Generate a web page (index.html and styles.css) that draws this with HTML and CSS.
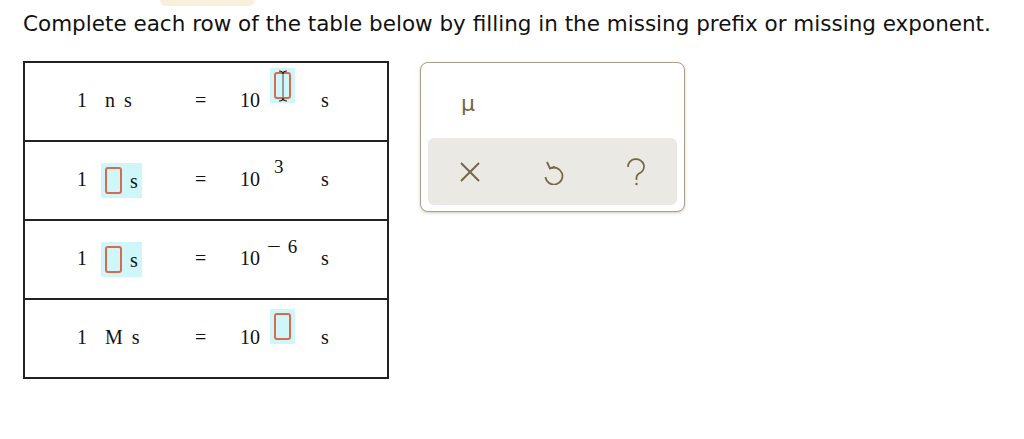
FILE: index.html
```html
<!DOCTYPE html>
<html>
<head>
<meta charset="utf-8">
<link rel="stylesheet" href="styles.css">
</head>
<body>
<div class="tab"></div>
<p class="prompt">Complete each row of the table below by filling in the missing prefix or missing exponent.</p>
<div class="main">
  <div class="table">
    <div class="row">
      <span class="one t">1</span>
      <span class="pre"><span class="t">n</span><span class="t s">s</span></span>
      <span class="eq t">=</span>
      <span class="ten t">10</span>
      <span class="exp"><span class="box box-r1"><span class="red"></span>
        <svg class="ibeam" width="10" height="32" viewBox="0 0 10 32"><path d="M1 1 Q5 1 5 4 Q5 1 9 1 M5 4 V28 M1 31 Q5 31 5 28 Q5 31 9 31" fill="none" stroke="#222" stroke-width="1.2"/><path d="M5 4 V28" stroke="#fff" stroke-width="0.6"/></svg>
      </span></span>
      <span class="unit t">s</span>
    </div>
    <div class="row">
      <span class="one t">1</span>
      <span class="pre"><span class="pbox"><span class="red"></span><span class="t ps">s</span></span></span>
      <span class="eq t">=</span>
      <span class="ten t">10</span>
      <span class="exp"><span class="sup">3</span></span>
      <span class="unit t">s</span>
    </div>
    <div class="row">
      <span class="one t">1</span>
      <span class="pre"><span class="pbox"><span class="red"></span><span class="t ps">s</span></span></span>
      <span class="eq t">=</span>
      <span class="ten t">10</span>
      <span class="exp"><span class="sup neg"><span class="minus">&minus;</span>6</span></span>
      <span class="unit t">s</span>
    </div>
    <div class="row">
      <span class="one t">1</span>
      <span class="pre"><span class="t">M</span><span class="t s">s</span></span>
      <span class="eq t">=</span>
      <span class="ten t">10</span>
      <span class="exp"><span class="box box-r4"><span class="red"></span></span></span>
      <span class="unit t">s</span>
    </div>
  </div>
  <div class="panel">
    <div class="keys"><span class="mu">μ</span></div>
    <div class="tools">
      <span class="tool"><svg width="24" height="24" viewBox="0 0 24 24"><path d="M3 3 L21 21 M21 3 L3 21" stroke="#746845" stroke-width="2" fill="none"/></svg></span>
      <span class="tool"><svg width="24" height="26" viewBox="0 0 24 26"><path d="M6 3 L9 9.5 L14 7.8" stroke="#746845" stroke-width="1.8" fill="none" stroke-linejoin="round"/><path d="M9 9.5 A8.5 8.5 0 1 1 4.5 18" stroke="#746845" stroke-width="1.8" fill="none"/></svg></span>
      <span class="tool"><svg width="24" height="28" viewBox="0 0 24 28"><path d="M4 9 A8 7.5 0 1 1 15 15.5 Q12.5 17 12.5 20 V22" stroke="#746845" stroke-width="1.7" fill="none"/><circle cx="12.5" cy="26" r="1.2" fill="#746845"/></svg></span>
    </div>
  </div>
</div>
</body>
</html>
```
FILE: styles.css
```css
html, body {
  margin: 0;
  padding: 0;
  background: #fff;
}
body {
  width: 1024px;
  height: 439px;
  overflow: hidden;
}
.tab {
  margin-left: 160px;
  width: 95px;
  height: 6px;
  background: #f7f1dc;
  border-radius: 0 0 8px 8px;
}
.prompt {
  margin: 5px 0 0 23px;
  font-family: "DejaVu Sans", Verdana, sans-serif;
  font-size: 21.5px;
  line-height: 25px;
  color: #111;
}
.main {
  display: flex;
  align-items: flex-start;
  margin: 25px 0 0 23px;
  gap: 31px;
}
.table {
  width: 362px;
  border: 2px solid #222;
  display: flex;
  flex-direction: column;
  gap: 2px;
  background: #222;
}
.row {
  height: 77px;
  background: #fff;
  display: flex;
  align-items: flex-start;
  padding-left: 52px;
  font-family: "Liberation Serif", "Times New Roman", serif;
  font-size: 20px;
  color: #111;
}
.t {
  display: block;
  line-height: 20px;
  margin-top: 27px;
}
.one { width: 24px; }
.pre { width: 94px; display: flex; align-items: flex-start; padding-left: 4px; box-sizing: border-box; }
.pre .s { margin-left: 9px; }
.eq { width: 45px; }
.ten { width: 30px; }
.exp { width: 51px; display: flex; align-items: flex-start; }
.box {
  position: relative;
  width: 25px;
  height: 35px;
  background: #cff6f9;
  display: flex;
  justify-content: center;
  align-items: center;
}
.box-r1 { margin-top: 5px; }
.box-r4 { margin-top: 9px; }
.red {
  width: 13px;
  height: 23px;
  border: 2px solid #d96a50;
  border-radius: 3px;
  background: #cff6f9;
}
.ibeam {
  position: absolute;
  left: 8px;
  top: 2px;
}
.pbox {
  margin-left: -4px;
  margin-top: 21px;
  width: 41px;
  height: 35px;
  background: #cff6f9;
  display: flex;
  align-items: center;
  padding-left: 4px;
  box-sizing: border-box;
}
.pbox .red { flex: none; }
.pbox .ps { margin: 0 0 0 8px; }
.sup {
  display: block;
  font-size: 19px;
  line-height: 19px;
  margin-top: 15px;
  padding-left: 4px;
}
.sup.neg {
  display: flex;
  align-items: baseline;
  padding-left: 0;
  margin-left: -3px;
  margin-top: 16px;
}
.minus {
  display: inline-block;
  transform: scaleX(1.3);
  transform-origin: left center;
  margin-right: 10px;
}
.panel {
  margin-top: 1px;
  border: 1px solid #a8a088;
  border-radius: 8px;
  box-shadow: 0 1px 3px rgba(120, 110, 80, 0.35);
  background: #fff;
  padding: 0 7px 6px 7px;
  display: flex;
  flex-direction: column;
  box-sizing: border-box;
  width: 265px;
  height: 150px;
}
.keys {
  height: 75px;
  display: flex;
  align-items: center;
  padding-left: 33px;
}
.mu {
  font-family: "DejaVu Sans", sans-serif;
  font-size: 22px;
  color: #746845;
  margin-top: 5px;
}
.tools {
  flex: 1;
  background: #ebe9e4;
  border-radius: 6px;
  display: flex;
  align-items: center;
  padding-left: 30px;
  gap: 59px;
}
.tool {
  width: 24px;
  display: flex;
  justify-content: center;
}
```
